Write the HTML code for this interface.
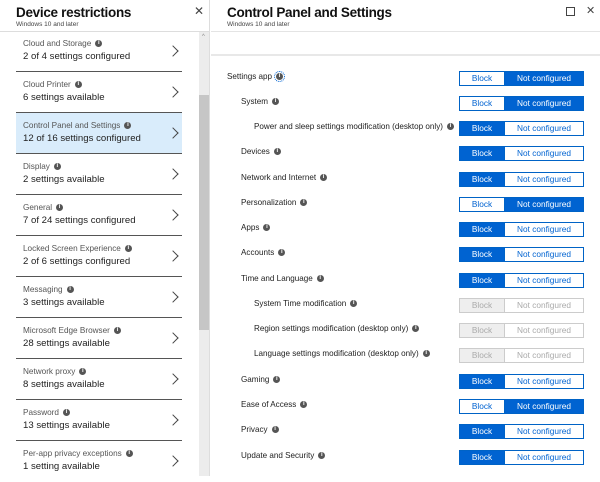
<!DOCTYPE html>
<html><head><meta charset="utf-8"><style>
*{margin:0;padding:0;box-sizing:border-box}
body{width:600px;height:476px;overflow:hidden;background:#fff;font-family:"Liberation Sans",sans-serif;position:relative}
.abs{position:absolute}
.left{left:0;top:0;width:210px;height:476px;background:#fff;border-right:1px solid #ddd}
.t{font-size:13.5px;font-weight:bold;color:#111;letter-spacing:-0.3px}
.s{font-size:6.5px;color:#444}
.item{position:absolute;left:16px;width:166px;height:41px;border-bottom:1px solid #555}
.item .l{position:absolute;left:7px;top:8px;font-size:8.2px;color:#555}
.item .v{position:absolute;left:7px;top:20px;font-size:9.6px;color:#222}
.item .c{position:absolute;right:5px;width:8px;height:8px;border-right:1px solid #444;border-top:1px solid #444;transform:rotate(45deg);top:16px}
.i{display:inline-block;width:7px;height:7px;border-radius:50%;background:#555;color:#fff;font-size:6px;line-height:7px;text-align:center;font-weight:bold;vertical-align:middle;margin-left:4px}
.row{position:absolute;left:0;width:600px;height:16px}
.row .n{position:absolute;top:1px;font-size:8.1px;color:#222}
.tg{position:absolute;left:459px;top:0;width:125px;height:15px;border:1px solid #0063c6;font-size:8.3px;display:flex}
.tg span{display:block;text-align:center;line-height:13px}
.tg .b{width:45px;border-right:1px solid #0063c6}
.tg .nc{flex:1}
.on{background:#0063d1;color:#fff}
.off{background:#fff;color:#0063d1}
.tg.dis{border-color:#ccc}
.tg.dis .b{border-color:#ccc;background:#eee;color:#aaa}
.tg.dis .nc{background:#fff;color:#aaa}
</style></head><body>
<div class="abs left">
<div class="abs t" style="left:16px;top:5px">Device restrictions</div>
<div class="abs s" style="left:16px;top:21px">Windows 10 and later</div>
<div class="abs" style="left:194px;top:4px;font-size:12px;color:#444">✕</div>
<div class="abs" style="left:0;top:31px;width:210px;border-top:1px solid #ddd"></div>
<div class="abs" style="left:199px;top:32px;width:10px;height:444px;background:#ececec"></div>
<div class="abs" style="left:199px;top:95px;width:10px;height:235px;background:#c6c6c6"></div>
<div class="abs" style="left:202px;top:34px;font-size:6px;color:#888">^</div>
<div class="abs" style="left:16px;top:113px;width:166px;height:40px;background:#d9ecfb"></div>
<div class="item" style="top:31px"><div class="l">Cloud and Storage<span class="i">i</span></div><div class="v">2 of 4 settings configured</div><div class="c"></div></div>
<div class="item" style="top:72px"><div class="l">Cloud Printer<span class="i">i</span></div><div class="v">6 settings available</div><div class="c"></div></div>
<div class="item" style="top:113px"><div class="l">Control Panel and Settings<span class="i">i</span></div><div class="v">12 of 16 settings configured</div><div class="c"></div></div>
<div class="item" style="top:154px"><div class="l">Display<span class="i">i</span></div><div class="v">2 settings available</div><div class="c"></div></div>
<div class="item" style="top:195px"><div class="l">General<span class="i">i</span></div><div class="v">7 of 24 settings configured</div><div class="c"></div></div>
<div class="item" style="top:236px"><div class="l">Locked Screen Experience<span class="i">i</span></div><div class="v">2 of 6 settings configured</div><div class="c"></div></div>
<div class="item" style="top:277px"><div class="l">Messaging<span class="i">i</span></div><div class="v">3 settings available</div><div class="c"></div></div>
<div class="item" style="top:318px"><div class="l">Microsoft Edge Browser<span class="i">i</span></div><div class="v">28 settings available</div><div class="c"></div></div>
<div class="item" style="top:359px"><div class="l">Network proxy<span class="i">i</span></div><div class="v">8 settings available</div><div class="c"></div></div>
<div class="item" style="top:400px"><div class="l">Password<span class="i">i</span></div><div class="v">13 settings available</div><div class="c"></div></div>
<div class="item" style="top:441px;border:none"><div class="l">Per-app privacy exceptions<span class="i">i</span></div><div class="v">1 setting available</div><div class="c"></div></div>
</div>
<div class="abs t" style="left:227px;top:5px">Control Panel and Settings</div>
<div class="abs s" style="left:227px;top:21px">Windows 10 and later</div>
<div class="abs" style="left:566px;top:7px;width:9px;height:9px;border:1px solid #444"></div>
<div class="abs" style="left:586px;top:4px;font-size:11px;color:#444">✕</div>
<div class="abs" style="left:211px;top:31px;width:389px;border-top:1px solid #e4e4e4"></div>
<div class="abs" style="left:211px;top:54px;width:389px;border-top:2px solid #e8e8e8"></div>

<div class="row" style="top:71px"><div class="n" style="left:227px">Settings app<span class="i" style="outline:1px dotted #0063d1;outline-offset:1px">i</span></div><div class="tg"><span class="b off">Block</span><span class="nc on">Not configured</span></div></div>
<div class="row" style="top:96px"><div class="n" style="left:241px">System<span class="i">i</span></div><div class="tg"><span class="b off">Block</span><span class="nc on">Not configured</span></div></div>
<div class="row" style="top:121px"><div class="n" style="left:254px">Power and sleep settings modification (desktop only)<span class="i">i</span></div><div class="tg"><span class="b on">Block</span><span class="nc off">Not configured</span></div></div>
<div class="row" style="top:146px"><div class="n" style="left:241px">Devices<span class="i">i</span></div><div class="tg"><span class="b on">Block</span><span class="nc off">Not configured</span></div></div>
<div class="row" style="top:172px"><div class="n" style="left:241px">Network and Internet<span class="i">i</span></div><div class="tg"><span class="b on">Block</span><span class="nc off">Not configured</span></div></div>
<div class="row" style="top:197px"><div class="n" style="left:241px">Personalization<span class="i">i</span></div><div class="tg"><span class="b off">Block</span><span class="nc on">Not configured</span></div></div>
<div class="row" style="top:222px"><div class="n" style="left:241px">Apps<span class="i">i</span></div><div class="tg"><span class="b on">Block</span><span class="nc off">Not configured</span></div></div>
<div class="row" style="top:247px"><div class="n" style="left:241px">Accounts<span class="i">i</span></div><div class="tg"><span class="b on">Block</span><span class="nc off">Not configured</span></div></div>
<div class="row" style="top:273px"><div class="n" style="left:241px">Time and Language<span class="i">i</span></div><div class="tg"><span class="b on">Block</span><span class="nc off">Not configured</span></div></div>
<div class="row" style="top:298px"><div class="n" style="left:254px">System Time modification<span class="i">i</span></div><div class="tg dis"><span class="b">Block</span><span class="nc">Not configured</span></div></div>
<div class="row" style="top:323px"><div class="n" style="left:254px">Region settings modification (desktop only)<span class="i">i</span></div><div class="tg dis"><span class="b">Block</span><span class="nc">Not configured</span></div></div>
<div class="row" style="top:348px"><div class="n" style="left:254px">Language settings modification (desktop only)<span class="i">i</span></div><div class="tg dis"><span class="b">Block</span><span class="nc">Not configured</span></div></div>
<div class="row" style="top:374px"><div class="n" style="left:241px">Gaming<span class="i">i</span></div><div class="tg"><span class="b on">Block</span><span class="nc off">Not configured</span></div></div>
<div class="row" style="top:399px"><div class="n" style="left:241px">Ease of Access<span class="i">i</span></div><div class="tg"><span class="b off">Block</span><span class="nc on">Not configured</span></div></div>
<div class="row" style="top:424px"><div class="n" style="left:241px">Privacy<span class="i">i</span></div><div class="tg"><span class="b on">Block</span><span class="nc off">Not configured</span></div></div>
<div class="row" style="top:450px"><div class="n" style="left:241px">Update and Security<span class="i">i</span></div><div class="tg"><span class="b on">Block</span><span class="nc off">Not configured</span></div></div>
</body></html>
